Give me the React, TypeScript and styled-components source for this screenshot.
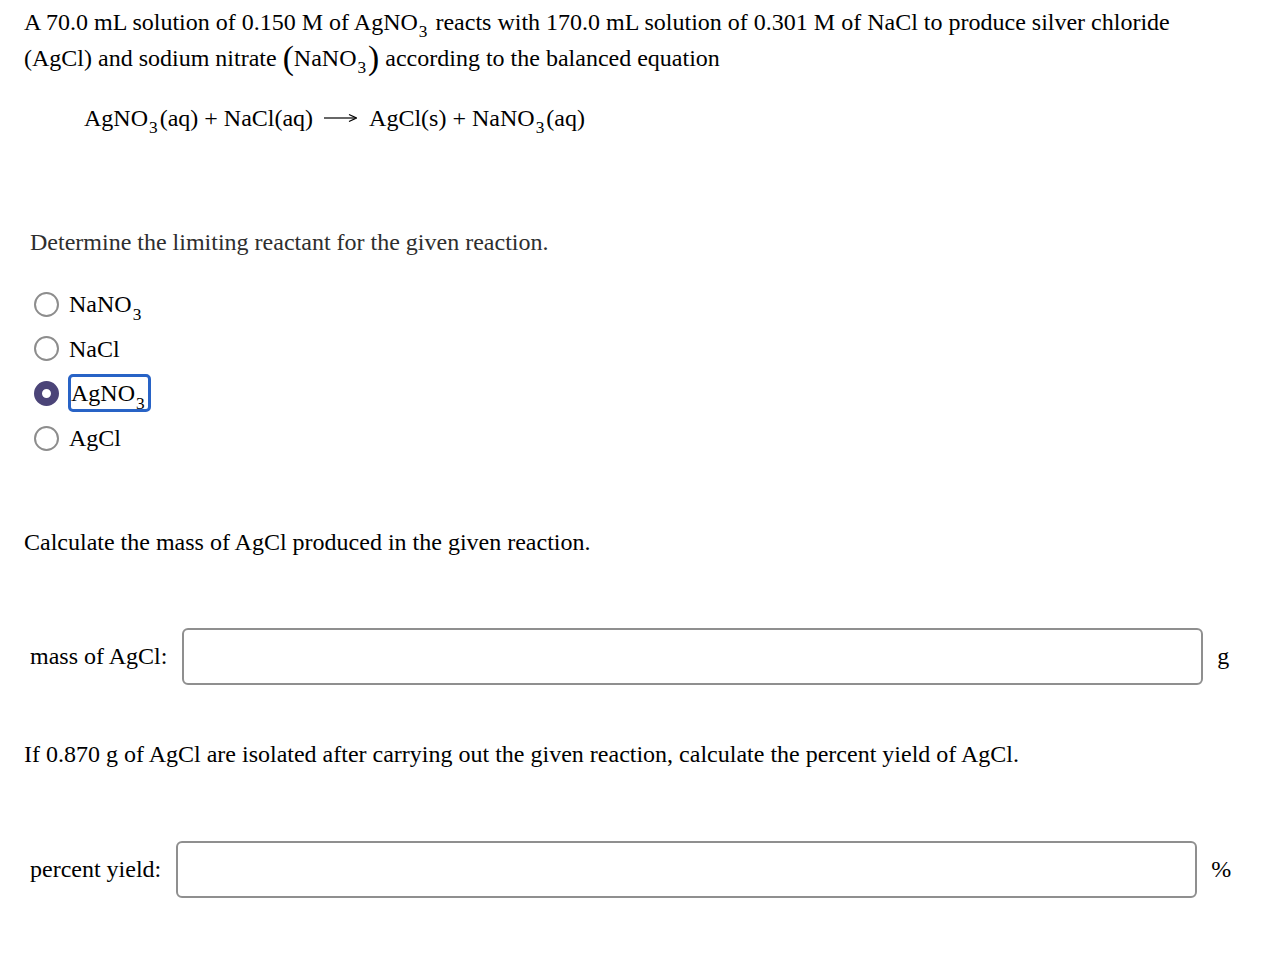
import React from 'react';
import styled, { createGlobalStyle } from 'styled-components';

const GlobalStyle = createGlobalStyle`
  body {
    margin: 0;
    background: #ffffff;
    font-family: "Liberation Serif", "Times New Roman", serif;
    color: #000;
  }
`;

const Page = styled.div`
  padding: 4px 24px 40px 24px;
  font-size: 24px;
`;

const Intro = styled.p`
  margin: 0;
  line-height: 36px;
`;

const Equation = styled.div`
  margin: 24px 0 0 60px;
  line-height: 36px;
  display: flex;
  align-items: center;
`;

const Sub = styled.sub`
  font-size: 72%;
  vertical-align: -0.42em;
  line-height: 0;
  margin-left: 1px;
  margin-right: 2px;
`;

const BigParen = styled.span`
  font-size: 140%;
  line-height: 0;
  vertical-align: -0.1em;
`;

const Arrow = styled.svg`
  width: 33px;
  height: 12px;
  margin: 0 12px 0 11px;
`;

const Prompt = styled.p<{ $muted?: boolean; $indent?: number; $top: number }>`
  margin: ${p => p.$top}px 0 0 ${p => p.$indent ?? 0}px;
  line-height: 36px;
  color: ${p => (p.$muted ? '#2e2e2e' : '#000')};
`;

const Options = styled.div`
  margin: 22px 0 0 10px;
  display: flex;
  flex-direction: column;
`;

const Option = styled.label`
  display: flex;
  align-items: center;
  height: 44.6px;
  gap: 9px;
`;

const Radio = styled.span<{ $checked?: boolean }>`
  width: 25px;
  height: 25px;
  box-sizing: border-box;
  border-radius: 50%;
  border: ${p => (p.$checked ? '8px solid #4b4478' : '2px solid #8d8d8d')};
  background: #fff;
  flex: none;
`;

const OptionText = styled.span<{ $focused?: boolean }>`
  padding: 1px 1px 1px 0;
  margin-left: ${p => (p.$focused ? '0' : '1px')};
  border: ${p => (p.$focused ? '3px solid #2863c6' : '0')};
  border-radius: 5px;
  line-height: 30px;
`;

const AnswerRow = styled.div<{ $top: number }>`
  display: flex;
  align-items: center;
  margin: ${p => p.$top}px 0 0 6px;
`;

const FieldLabel = styled.span`
  margin-right: 15px;
`;

const Field = styled.input`
  width: 1021px;
  height: 57px;
  box-sizing: border-box;
  border: 2px solid #8f8f8f;
  border-radius: 6px;
  background: #fff;
  font: inherit;
  padding: 0 10px;
  outline: none;
  flex: none;
`;

const Unit = styled.span`
  margin-left: 14px;
`;

const Chem = ({ base, sub }: { base: string; sub?: string }) => (
  <>
    {base}
    {sub && <Sub>{sub}</Sub>}
  </>
);

const options = [
  { base: 'NaNO', sub: '3' },
  { base: 'NaCl' },
  { base: 'AgNO', sub: '3', checked: true },
  { base: 'AgCl' },
];

export default function App() {
  return (
    <Page>
      <GlobalStyle />
      <Intro>
        A 70.0 mL solution of 0.150 M of <Chem base="AgNO" sub="3" /> reacts with 170.0 mL solution of 0.301 M of
        NaCl to produce silver chloride
        <br />
        (AgCl) and sodium nitrate <BigParen>(</BigParen>
        <Chem base="NaNO" sub="3" />
        <BigParen>)</BigParen> according to the balanced equation
      </Intro>

      <Equation>
        <span>
          <Chem base="AgNO" sub="3" />(aq) + NaCl(aq)
        </span>
        <Arrow viewBox="0 0 33 12">
          <line x1="0" y1="6" x2="31" y2="6" stroke="#000" strokeWidth="1.2" />
          <path d="M25 2.5 L32.5 6 L25 9.5" fill="none" stroke="#000" strokeWidth="1.2" />
        </Arrow>
        <span>
          AgCl(s) + <Chem base="NaNO" sub="3" />(aq)
        </span>
      </Equation>

      <Prompt $muted $indent={6} $top={88}>
        Determine the limiting reactant for the given reaction.
      </Prompt>

      <Options>
        {options.map(o => (
          <Option key={o.base}>
            <Radio $checked={o.checked} />
            <OptionText $focused={o.checked}>
              <Chem base={o.base} sub={o.sub} />
            </OptionText>
          </Option>
        ))}
      </Options>

      <Prompt $top={64}>Calculate the mass of AgCl produced in the given reaction.</Prompt>

      <AnswerRow $top={68}>
        <FieldLabel>mass of AgCl:</FieldLabel>
        <Field type="text" />
        <Unit>g</Unit>
      </AnswerRow>

      <Prompt $top={51}>
        If 0.870 g of AgCl are isolated after carrying out the given reaction, calculate the percent yield of AgCl.
      </Prompt>

      <AnswerRow $top={69}>
        <FieldLabel>percent yield:</FieldLabel>
        <Field type="text" />
        <Unit>%</Unit>
      </AnswerRow>
    </Page>
  );
}
